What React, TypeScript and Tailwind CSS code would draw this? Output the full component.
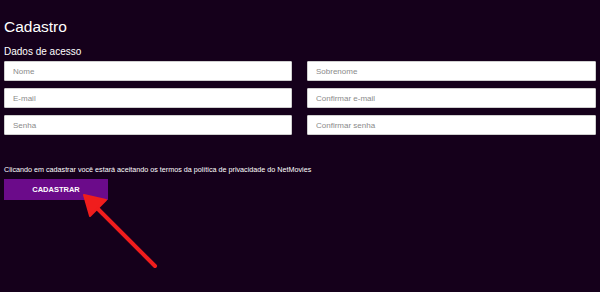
export default function App() {
  const rows: [string, string][] = [
    ["Nome", "Sobrenome"],
    ["E-mail", "Confirmar e-mail"],
    ["Senha", "Confirmar senha"],
  ];
  return (
    <div className="relative h-[292px] w-[600px] overflow-hidden bg-[#15001b] px-1 text-white" style={{ fontFamily: '"Liberation Sans", Arial, sans-serif' }}>
      <h1 className="pt-[18px] text-[15.5px] leading-[18px]">Cadastro</h1>
      <h2 className="mt-[10px] text-[10px] leading-[11px]">Dados de acesso</h2>
      <div className="mt-[4px] grid grid-cols-[288px_289px] gap-x-[15px] gap-y-[7px]">
        {rows.map(([a, b]) => [a, b].map((p) => (
          <input key={p} placeholder={p} className="h-[20px] w-full rounded-[1px] border border-[#cfcfcf] bg-white px-[8px] text-[8px] text-gray-700 outline-none placeholder:text-[#8a8a8a]" />
        )))}
      </div>
      <p className="mt-[30px] text-[7.2px] leading-[10px]">Clicando em cadastrar você estará aceitando os termos da política de privacidade do NetMovies</p>
      <button className="mt-[2px] h-[21px] w-[104px] bg-[#6b0b8a] text-[7.5px] font-bold text-white">CADASTRAR</button>
      <svg className="absolute left-0 top-0" width="600" height="292" viewBox="0 0 600 292">
        <line x1="155" y1="266" x2="96" y2="207" stroke="#f01d1d" strokeWidth="4" strokeLinecap="round" />
        <polygon points="84,195 106,200 90,216" fill="#f01d1d" stroke="#f01d1d" strokeWidth="2" strokeLinejoin="round" />
      </svg>
    </div>
  );
}
